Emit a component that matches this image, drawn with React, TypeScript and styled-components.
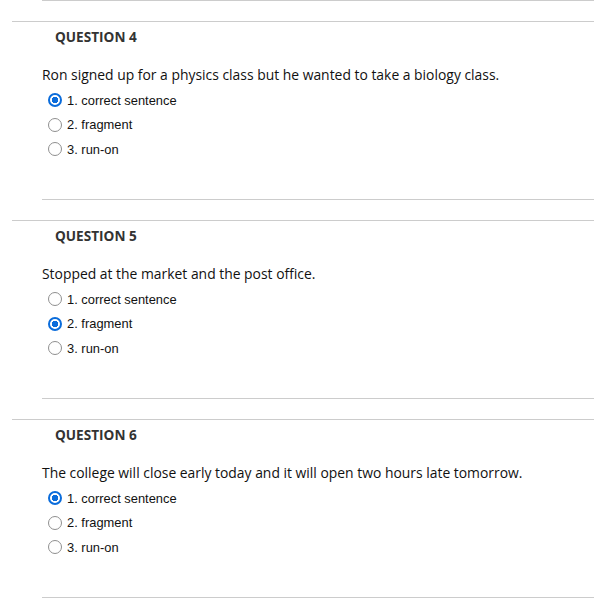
import React from "react";
import styled, { createGlobalStyle } from "styled-components";

const GlobalStyle = createGlobalStyle`
  html, body {
    margin: 0;
    padding: 0;
    background: #ffffff;
  }
`;

const Page = styled.div`
  width: 594px;
  display: flex;
  flex-direction: column;
`;

const Block = styled.div`
  height: 199px;
  display: flex;
  flex-direction: column;
`;

const Divider = styled.div`
  height: 1px;
  margin-left: 42px;
  margin-bottom: 20px;
  background: #cccccc;
`;

const QuestionBox = styled.div`
  border-top: 1px solid #cccccc;
  margin-left: 12px;
  display: flex;
  flex-direction: column;
`;

const Header = styled.h3`
  margin: 0;
  padding: 5px 0 0 43px;
  line-height: 20px;
  font-family: "Open Sans", "Noto Sans", sans-serif;
  font-size: 13.6px;
  font-weight: 700;
  color: #333333;
`;

const Body = styled.div`
  padding: 18px 0 0 30px;
  display: flex;
  flex-direction: column;
`;

const Prompt = styled.p`
  margin: 0 0 3px;
  line-height: 20px;
  font-family: "Open Sans", "Noto Sans", sans-serif;
  font-size: 13.9px;
  color: #111111;
`;

const Options = styled.ul`
  list-style: none;
  margin: 0;
  padding: 0 0 0 6px;
`;

const Option = styled.li`
  height: 24.5px;
  display: flex;
  align-items: center;
  gap: 5px;
  font-family: "Liberation Sans", Arial, sans-serif;
  font-size: 12.9px;
  color: #111111;
`;

const Radio = styled.input`
  appearance: none;
  -webkit-appearance: none;
  margin: 0;
  width: 14px;
  height: 14px;
  box-sizing: border-box;
  border-radius: 50%;
  border: 1.5px solid #8f8f8f;
  background: #ffffff;

  &:checked {
    border: 2px solid #0a6cdb;
    background: radial-gradient(circle, #0a6cdb 0 3px, #ffffff 3.5px);
  }
`;

type Question = {
  number: number;
  prompt: string;
  answer: number;
};

const choices = ["correct sentence", "fragment", "run-on"];

const questions: Question[] = [
  {
    number: 4,
    prompt: "Ron signed up for a physics class but he wanted to take a biology class.",
    answer: 0,
  },
  {
    number: 5,
    prompt: "Stopped at the market and the post office.",
    answer: 1,
  },
  {
    number: 6,
    prompt: "The college will close early today and it will open two hours late tomorrow.",
    answer: 0,
  },
];

const App: React.FC = () => (
  <Page>
    <GlobalStyle />
    {questions.map((q) => (
      <Block key={q.number}>
        <Divider />
        <QuestionBox>
          <Header>QUESTION {q.number}</Header>
          <Body>
            <Prompt>{q.prompt}</Prompt>
            <Options>
              {choices.map((c, i) => (
                <Option key={c}>
                  <Radio
                    type="radio"
                    name={`q${q.number}`}
                    defaultChecked={i === q.answer}
                  />
                  <span>
                    {i + 1}. {c}
                  </span>
                </Option>
              ))}
            </Options>
          </Body>
        </QuestionBox>
      </Block>
    ))}
    <Divider />
  </Page>
);

export default App;
